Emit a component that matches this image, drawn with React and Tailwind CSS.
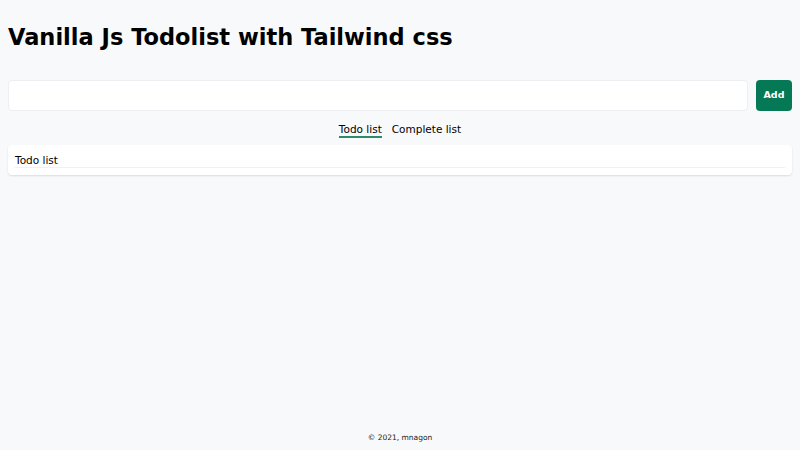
import React, { useState } from "react";

const App = () => {
  const [tab, setTab] = useState("todo");
  const [text, setText] = useState("");

  const tabClass = (name) =>
    tab === name
      ? "leading-[12px] pb-[1px] border-b-2 border-[#2f8a6c]"
      : "leading-[12px] pb-[1px] border-b-2 border-transparent";

  return (
    <div className="min-h-screen flex flex-col bg-[#f8f9fb] text-black font-['DejaVu_Sans',sans-serif]">
      <main className="px-2 flex-1">
        <h1 className="text-[22.5px] leading-[30px] font-bold pt-[22px] mb-[28px]">
          Vanilla Js Todolist with Tailwind css
        </h1>

        <form
          className="flex gap-2"
          onSubmit={(e) => {
            e.preventDefault();
            setText("");
          }}
        >
          <input
            type="text"
            value={text}
            onChange={(e) => setText(e.target.value)}
            className="flex-1 h-[31px] bg-white border border-[#eceef1] rounded-sm px-2 text-[10px] outline-none"
          />
          <button
            type="submit"
            className="h-[31px] w-[36px] rounded-sm bg-[#057955] text-white text-[9.5px] font-bold"
          >
            Add
          </button>
        </form>

        <div className="flex justify-center gap-[10px] mt-[12px] text-[10.5px]">
          <button onClick={() => setTab("todo")} className={tabClass("todo")}>
            Todo list
          </button>
          <button
            onClick={() => setTab("complete")}
            className={tabClass("complete")}
          >
            Complete list
          </button>
        </div>

        <div className="mt-[7px] bg-white rounded-sm shadow-[0_1px_2px_rgba(0,0,0,0.12)] px-[7px] pt-[9px] pb-[7px]">
          <p className="text-[10.5px] leading-[12px] pb-[1px] border-b border-[#f0f1f3]">
            {tab === "todo" ? "Todo list" : "Complete list"}
          </p>
        </div>
      </main>

      <footer className="text-center text-[7.5px] leading-[10px] text-[#222] pb-[7px]">
        © 2021, mnagon
      </footer>
    </div>
  );
};

export default App;
